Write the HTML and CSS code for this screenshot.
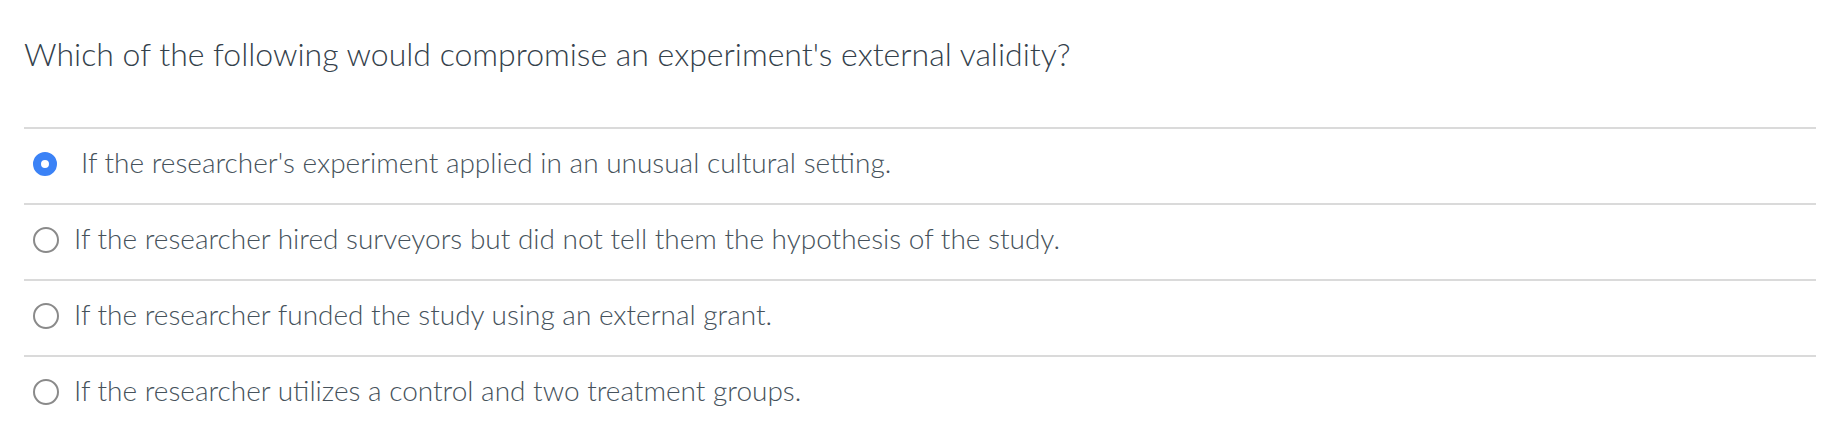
FILE: index.html
```html
<!DOCTYPE html>
<html lang="en">
<head>
<meta charset="utf-8">
<title>Question</title>
<link rel="stylesheet" href="styles.css">
</head>
<body>
<div class="question">
  <div class="question-text">Which of the following would compromise an experiment's external validity?</div>
  <div class="answers">
    <label class="answer selected">
      <span class="radio checked"></span>
      <span class="answer-text">If the researcher's experiment applied in an unusual cultural setting.</span>
    </label>
    <label class="answer">
      <span class="radio"></span>
      <span class="answer-text">If the researcher hired surveyors but did not tell them the hypothesis of the study.</span>
    </label>
    <label class="answer">
      <span class="radio"></span>
      <span class="answer-text">If the researcher funded the study using an external grant.</span>
    </label>
    <label class="answer">
      <span class="radio"></span>
      <span class="answer-text">If the researcher utilizes a control and two treatment groups.</span>
    </label>
  </div>
</div>
</body>
</html>
```
FILE: styles.css
```css
html, body {
  margin: 0;
  padding: 0;
  background: #ffffff;
}
body {
  font-family: "Lato Light", Lato, "Liberation Sans", sans-serif;
  color: #34414b;
}
.question {
  padding: 35px 0 0 24px;
  width: 1792px;
}
.question-text {
  font-size: 32px;
  font-weight: 300;
  line-height: 38px;
  margin-bottom: 54px;
}
.answers {
  display: flex;
  flex-direction: column;
}
.answer {
  box-sizing: border-box;
  display: flex;
  align-items: center;
  height: 76px;
  padding-bottom: 9px;
  border-top: 2px solid #dadada;
}
.radio {
  box-sizing: border-box;
  flex: none;
  width: 26px;
  height: 26px;
  border-radius: 50%;
  border: 2.5px solid #8a8a8a;
  margin: 4px 15px 0 9px;
}
.radio.checked {
  width: 24px;
  height: 24px;
  border: 8px solid #3b82f6;
  margin: 4px 24px 0 9px;
}
.answer-text {
  font-size: 28px;
  font-weight: 300;
  color: #46525b;
}
```
